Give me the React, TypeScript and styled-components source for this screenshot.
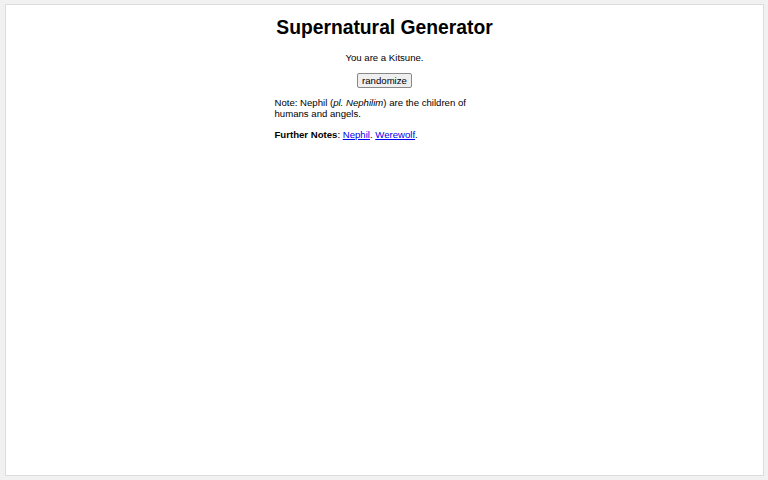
import * as React from 'react';
import styled, { createGlobalStyle } from 'styled-components';

const GlobalStyle = createGlobalStyle`
  html, body {
    margin: 0;
    padding: 0;
    height: 100%;
    background: #f1f1f1;
    font-family: "Liberation Sans", Arial, sans-serif;
  }
  #root {
    height: 100%;
  }
`;

const Page = styled.div`
  box-sizing: border-box;
  height: 100%;
  padding: 4px 4px 4px 5px;
  display: flex;
`;

const Card = styled.main`
  flex: 1;
  background: #fff;
  border: 1px solid #dcdcdc;
  display: flex;
  justify-content: center;
`;

const Column = styled.div`
  width: 220px;
  padding-top: 11px;
  color: #000;
  font-size: 9.6px;
  line-height: 11px;
`;

const Title = styled.h1`
  margin: 0 0 12px;
  font-size: 19.3px;
  line-height: 24px;
  text-align: center;
  white-space: nowrap;
`;

const Result = styled.p`
  margin: 0 0 10px;
  text-align: center;
`;

const Center = styled.div`
  text-align: center;
  margin-bottom: 9px;
`;

const Button = styled.button`
  font-family: inherit;
  font-size: 9.6px;
  padding: 1px 4px;
  border: 1px solid #888;
  border-radius: 2px;
  background: #efefef;
  color: #000;
`;

const Para = styled.p`
  margin: 0 0 10px;
`;

const Link = styled.a`
  color: #00e;
  text-decoration: underline;
`;

export default function App() {
  return (
    <>
      <GlobalStyle />
      <Page>
        <Card>
          <Column>
            <Title>Supernatural Generator</Title>
            <Result>You are a Kitsune.</Result>
            <Center>
              <Button type="button">randomize</Button>
            </Center>
            <Para>
              Note: Nephil (<i>pl. Nephilim</i>) are the children of humans and angels.
            </Para>
            <Para>
              <b>Further Notes</b>: <Link href="#nephil">Nephil</Link>.{' '}
              <Link href="#werewolf">Werewolf</Link>.
            </Para>
          </Column>
        </Card>
      </Page>
    </>
  );
}
